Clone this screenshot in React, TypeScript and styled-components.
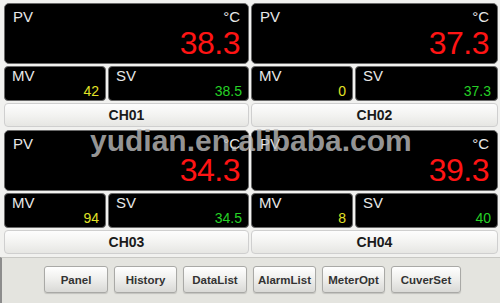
import React from "react";
import styled, { createGlobalStyle } from "styled-components";

const Global = createGlobalStyle`
  html, body { margin: 0; padding: 0; background: #f1f1ef; }
  body { font-family: "Liberation Sans", Arial, sans-serif; }
`;

const Page = styled.div`
  position: relative;
  width: 500px;
  height: 303px;
  overflow: hidden;
  display: flex;
  flex-direction: column;
  background: #f1f1ef;
`;

const Grid = styled.div`
  display: grid;
  grid-template-columns: 245px 247px;
  column-gap: 2px;
  row-gap: 3px;
  padding: 3px 2px 0 4px;
`;

const Channel = styled.div`
  display: flex;
  flex-direction: column;
`;

const PVBox = styled.div`
  height: 61px;
  box-sizing: border-box;
  background: #000;
  border: 1px solid #6a6a6a;
  border-radius: 5px;
  padding: 4px 8px 0 8px;
  display: flex;
  flex-direction: column;
`;

const HeadRow = styled.div`
  display: flex;
  justify-content: space-between;
  color: #e8e8e8;
  font-size: 15px;
  line-height: 17px;
`;

const PVValue = styled.div`
  text-align: right;
  color: #ff1414;
  font-size: 32px;
  line-height: 30px;
  letter-spacing: -0.5px;
  margin-top: 3px;
`;

const LowerRow = styled.div`
  display: grid;
  grid-template-columns: 102px 1fr;
  column-gap: 2px;
  height: 35px;
  margin-top: 2px;
`;

const SmallBox = styled.div`
  box-sizing: border-box;
  background: #000;
  border: 1px solid #6a6a6a;
  border-radius: 4px;
  padding: 1px 6px 0 7px;
  display: flex;
  flex-direction: column;
`;

const SmallLabel = styled.div`
  color: #e8e8e8;
  font-size: 15px;
  line-height: 16px;
`;

const SmallValue = styled.div<{ $color: string }>`
  text-align: right;
  color: ${(p) => p.$color};
  font-size: 14px;
  line-height: 15px;
`;

const ChannelBar = styled.div`
  height: 24px;
  box-sizing: border-box;
  margin-top: 2px;
  border: 1px solid #cfcfcf;
  border-radius: 4px;
  background: linear-gradient(#fdfdfd, #f3f3f1 50%, #e6e6e3);
  display: flex;
  align-items: center;
  justify-content: center;
  font-weight: bold;
  font-size: 14px;
  color: #1a1a1a;
`;

const Toolbar = styled.div`
  margin-top: 3px;
  flex: 1;
  box-sizing: border-box;
  border-top: 1px solid #c8c8c4;
  border-left: 2px solid #8c8c8c;
  background: #e4e4df;
  display: flex;
  align-items: flex-start;
  gap: 6px;
  padding: 8px 0 0 42px;
`;

const ToolButton = styled.button<{ $w: number }>`
  width: ${(p) => p.$w}px;
  height: 27px;
  box-sizing: border-box;
  border: 1px solid #a9a9a6;
  border-radius: 3px;
  background: linear-gradient(#ffffff, #f0f0ee 45%, #d9d9d6);
  box-shadow: 0 1px 1px rgba(0, 0, 0, 0.15);
  font-family: "Liberation Sans", Arial, sans-serif;
  font-weight: bold;
  font-size: 11.5px;
  color: #333;
  padding: 0;
`;

const Watermark = styled.div`
  position: absolute;
  left: 90px;
  top: 124px;
  font-family: "Liberation Sans", Arial, sans-serif;
  font-weight: bold;
  font-size: 30px;
  line-height: 34px;
  color: rgba(190, 190, 190, 0.78);
  pointer-events: none;
  white-space: nowrap;
`;

type Ch = { name: string; pv: string; mv: string; sv: string };

const channels: Ch[] = [
  { name: "CH01", pv: "38.3", mv: "42", sv: "38.5" },
  { name: "CH02", pv: "37.3", mv: "0", sv: "37.3" },
  { name: "CH03", pv: "34.3", mv: "94", sv: "34.5" },
  { name: "CH04", pv: "39.3", mv: "8", sv: "40" },
];

const buttons: [string, number][] = [
  ["Panel", 64],
  ["History", 63],
  ["DataList", 64],
  ["AlarmList", 63],
  ["MeterOpt", 63],
  ["CuverSet", 70],
];

export default function App() {
  return (
    <Page>
      <Global />
      <Grid>
        {channels.map((c) => (
          <Channel key={c.name}>
            <PVBox>
              <HeadRow>
                <span>PV</span>
                <span>°C</span>
              </HeadRow>
              <PVValue>{c.pv}</PVValue>
            </PVBox>
            <LowerRow>
              <SmallBox>
                <SmallLabel>MV</SmallLabel>
                <SmallValue $color="#e2e226">{c.mv}</SmallValue>
              </SmallBox>
              <SmallBox>
                <SmallLabel>SV</SmallLabel>
                <SmallValue $color="#26d026">{c.sv}</SmallValue>
              </SmallBox>
            </LowerRow>
            <ChannelBar>{c.name}</ChannelBar>
          </Channel>
        ))}
      </Grid>
      <Toolbar>
        {buttons.map(([b, w]) => (
          <ToolButton key={b} $w={w}>
            {b}
          </ToolButton>
        ))}
      </Toolbar>
      <Watermark>yudian.en.alibaba.com</Watermark>
    </Page>
  );
}
